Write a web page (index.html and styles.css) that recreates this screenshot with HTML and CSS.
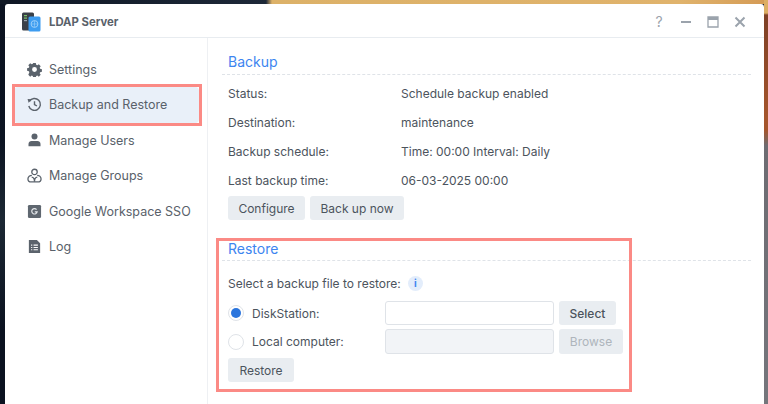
FILE: index.html
```html
<!DOCTYPE html>
<html lang="en">
<head>
<meta charset="utf-8">
<title>LDAP Server</title>
<link rel="stylesheet" href="styles.css">
</head>
<body>
<div class="window">
  <header class="titlebar">
    <svg class="app-icon" width="20" height="20" viewBox="0 0 20 20">
      <rect x="1" y="0.5" width="12" height="18" rx="1.5" fill="#3a4048"/>
      <rect x="3" y="3" width="3" height="1.2" fill="#7fc56b"/>
      <rect x="3" y="5.5" width="3" height="1.2" fill="#7fc56b"/>
      <rect x="3" y="8" width="3" height="1.2" fill="#9aa3ad"/>
      <rect x="7.5" y="4.5" width="12" height="15" rx="1.5" fill="#3d9cf0"/>
      <circle cx="13.5" cy="12" r="3.4" fill="none" stroke="#9ed0fa" stroke-width="1"/>
      <path d="M10.5 12h6M13.5 8.8v6.4" stroke="#9ed0fa" stroke-width=".6"/>
    </svg>
    <span class="app-title">LDAP Server</span>
    <div class="win-controls">
      <span class="help">?</span>
      <svg width="12" height="12" viewBox="0 0 12 12"><rect x="1" y="5" width="10" height="2" fill="#9ba3ac"/></svg>
      <svg width="12" height="12" viewBox="0 0 12 12"><path d="M1 1h10v10H1z" fill="none" stroke="#9ba3ac" stroke-width="1.3"/><rect x="1" y="1" width="10" height="3" fill="#9ba3ac"/></svg>
      <svg width="12" height="12" viewBox="0 0 12 12"><path d="M1.5 1.5l9 9M10.5 1.5l-9 9" stroke="#9ba3ac" stroke-width="2"/></svg>
    </div>
  </header>
  <div class="body">
    <nav class="sidebar">
      <a class="nav-item">
        <svg class="nav-icon" viewBox="0 0 16 16"><path fill="#5b636c" fill-rule="evenodd" d="M6.6 1h2.8l.4 1.9 1.2.5 1.6-1 2 2-1.1 1.6.5 1.2 1.9.4v2.8l-1.9.4-.5 1.2 1.1 1.6-2 2-1.6-1.1-1.2.5-.4 1.9H6.6l-.4-1.9-1.2-.5-1.6 1.1-2-2L2.5 11 2 9.8.1 9.4V6.6L2 6.2l.5-1.2-1.1-1.6 2-2 1.6 1 1.2-.5zM8 5.4a2.6 2.6 0 1 0 0 5.2 2.6 2.6 0 0 0 0-5.2z"/></svg>
        <span>Settings</span>
      </a>
      <a class="nav-item active">
        <svg class="nav-icon" viewBox="0 0 16 16"><path fill="none" stroke="#5b636c" stroke-width="1.5" d="M2.6 4.6A6.3 6.3 0 1 1 1.9 9.6"/><path fill="#5b636c" d="M.6 2.2l4.6.3-3.5 3.6z"/><path fill="none" stroke="#5b636c" stroke-width="1.5" d="M8 4.4V8l2.6 1.6"/></svg>
        <span>Backup and Restore</span>
      </a>
      <a class="nav-item">
        <svg class="nav-icon" viewBox="0 0 16 16"><circle cx="8" cy="3.8" r="3.2" fill="#5b636c"/><path fill="#5b636c" d="M1.6 14v-2.4c0-2 1.6-3.2 3.2-3.2h6.4c1.6 0 3.2 1.2 3.2 3.2V14z"/></svg>
        <span>Manage Users</span>
      </a>
      <a class="nav-item">
        <svg class="nav-icon" viewBox="0 0 16 16"><g fill="none" stroke="#5b636c" stroke-width="1.4"><circle cx="8" cy="4.2" r="2.9"/><path d="M5.2 7.8C3.2 7.8 1 9.2 1 11.6 1 13.6 2.6 14.8 4.6 14.8h6.8c2 0 3.6-1.2 3.6-3.2 0-2.4-2.2-3.8-4.2-3.8"/><path d="M8 14.6c0-2.8-1-4.6-3-4.8M8 14.6c0-2.8 1-4.6 3-4.8"/></g></svg>
        <span>Manage Groups</span>
      </a>
      <a class="nav-item">
        <svg class="nav-icon" viewBox="0 0 16 16"><rect x="1" y="1" width="14" height="14" rx="1.5" fill="#5f6770"/><path fill="none" stroke="#e4e7ea" stroke-width="1.3" d="M10.2 5.9A2.9 2.9 0 1 0 10.8 8.4H8.3"/></svg>
        <span>Google Workspace SSO</span>
      </a>
      <a class="nav-item">
        <svg class="nav-icon" viewBox="0 0 16 16"><path fill="#5b636c" d="M2 1h8.5L14 4.5V15H2z"/><path stroke="#fff" stroke-width="1.2" d="M4.4 6.5h1.2M7 6.5h4.6M4.4 9h1.2M7 9h4.6M4.4 11.5h1.2M7 11.5h4.6"/></svg>
        <span>Log</span>
      </a>
    </nav>
    <main class="content">
      <section class="backup">
        <h2 class="section-title">Backup</h2>
        <dl class="facts">
          <dt>Status:</dt><dd>Schedule backup enabled</dd>
          <dt>Destination:</dt><dd>maintenance</dd>
          <dt>Backup schedule:</dt><dd>Time: 00:00 Interval: Daily</dd>
          <dt>Last backup time:</dt><dd>06-03-2025 00:00</dd>
        </dl>
        <div class="btn-row">
          <button class="btn btn-configure">Configure</button>
          <button class="btn btn-backup">Back up now</button>
        </div>
      </section>
      <section class="restore">
        <h2 class="section-title">Restore</h2>
        <div class="select-line">
          <span>Select a backup file to restore:</span>
          <span class="info">i</span>
        </div>
        <div class="source-row">
          <span class="radio checked"></span>
          <span class="source-label">DiskStation:</span>
          <span class="field"></span>
          <button class="btn btn-select">Select</button>
        </div>
        <div class="source-row">
          <span class="radio"></span>
          <span class="source-label">Local computer:</span>
          <span class="field disabled"></span>
          <button class="btn btn-browse">Browse</button>
        </div>
        <button class="btn btn-restore">Restore</button>
      </section>
    </main>
  </div>
  <div class="mark mark-nav"></div>
  <div class="mark mark-restore"></div>
</div>
</body>
</html>
```
FILE: styles.css
```css
* { box-sizing: border-box; }
html, body { margin: 0; height: 100%; overflow: hidden; }
body {
  padding: 4px 4px 0 5px;
  background-color: #0b1220;
  background-image:
    linear-gradient(180deg, #dcae64 0, #dcae64 13px, #7d4026 15px, #a5552c 118px, #a5552c 130px, #6d6c72 146px, #75767c 100%),
    linear-gradient(90deg, #0f1724 0, #1d2838 266px, #dcb168 272px, #e0b36c 680px, #d49a55 100%),
    linear-gradient(180deg, #0b1220 0, #0c1422 140px, #1c2834 220px, #0b1220 330px);
  background-repeat: no-repeat;
  background-position: right top, left top, left top;
  background-size: 4px 100%, 100% 4px, 5px 100%;
  font-family: Inter, sans-serif;
  font-size: 12px;
  color: #4c545d;
}
.window {
  position: relative;
  height: 400px;
  background: #fff;
  border-radius: 3px 3px 0 0;
  display: flex;
  flex-direction: column;
}
.titlebar {
  height: 34px;
  flex: none;
  display: flex;
  align-items: center;
  padding: 2px 18px 0 16px;
  border-bottom: 1px solid #e8ecf0;
}
.app-icon { width: 20px; height: 20px; margin-right: 8px; }
.app-title { font-size: 11.3px; font-weight: 700; color: #59616a; }
.win-controls { margin-left: auto; display: flex; align-items: center; gap: 15px; }
.help { font-size: 14px; color: #9ba3ac; width: 12px; text-align: center; line-height: 12px; }
.body { flex: 1; display: flex; min-height: 0; }
.sidebar {
  width: 203px;
  flex: none;
  border-right: 1px solid #eef0f3;
  padding: 13.5px 8px 0 9px;
  display: flex;
  flex-direction: column;
}
.nav-item {
  height: 35.5px;
  display: flex;
  align-items: center;
  gap: 7px;
  padding-left: 13px;
  border-radius: 4px;
  color: #59616a;
  font-size: 12.5px;
}
.nav-item.active { background: #e9f0f9; }
.nav-icon { width: 15px; height: 15px; flex: none; }
.content { flex: 1; padding: 14px 13px 0 14px; min-width: 0; }
.section-title {
  margin: 0;
  height: 23px;
  padding-left: 6px;
  font-size: 14px;
  line-height: 20px;
  font-weight: 400;
  color: #3d85f0;
  border-bottom: 1px dashed #dfe3e8;
}
.facts {
  margin: 0;
  padding: 4px 0 0 6px;
  display: grid;
  grid-template-columns: 173px 1fr;
  grid-auto-rows: 29px;
  align-items: center;
}
.facts dt, .facts dd { margin: 0; }
.btn {
  font: inherit;
  height: 24px;
  border: 0;
  padding: 0;
  border-radius: 3px;
  background: #e9edf1;
  color: #4c545d;
  display: block;
}
.btn-row { display: flex; gap: 5px; padding: 1px 0 0 6px; }
.btn-configure { width: 77px; }
.btn-backup { width: 94px; }
.restore { margin-top: 18px; }
.restore .section-title { line-height: 22px; }
.select-line {
  display: flex;
  align-items: center;
  gap: 7px;
  height: 16px;
  margin: 14px 0 0 6px;
}
.info {
  width: 15px;
  height: 15px;
  border-radius: 50%;
  background: #e3edfb;
  color: #3d85f0;
  font-size: 10px;
  font-weight: 700;
  text-align: center;
  line-height: 15px;
}
.source-row {
  display: flex;
  align-items: center;
  height: 24px;
  margin: 10px 0 0 6px;
}
.source-row + .source-row { margin-top: 4px; height: 25px; }
.radio {
  width: 16px;
  height: 16px;
  border-radius: 50%;
  border: 1px solid #dfe3e8;
  background: #fff;
  flex: none;
  display: flex;
  align-items: center;
  justify-content: center;
}
.radio.checked::after {
  content: "";
  width: 10px;
  height: 10px;
  border-radius: 50%;
  background: #2b75dd;
}
.source-label { width: 133px; margin-left: 8px; flex: none; }
.field {
  width: 169px;
  height: 100%;
  border: 1px solid #dfe3e8;
  border-radius: 3px;
  background: #fff;
  flex: none;
}
.field.disabled { background: #f2f4f7; }
.btn-select { width: 57px; margin-left: 5px; font-weight: 500; }
.btn-browse { width: 64px; margin-left: 5px; height: 100%; color: #aeb5bc; }
.btn-restore { width: 66px; margin: 4px 0 0 6px; }
.mark { position: absolute; border: 3px solid #fb8a85; pointer-events: none; }
.mark-nav { left: 7px; top: 80px; width: 190px; height: 42px; }
.mark-restore { left: 211px; top: 234px; width: 416px; height: 154px; }
```
